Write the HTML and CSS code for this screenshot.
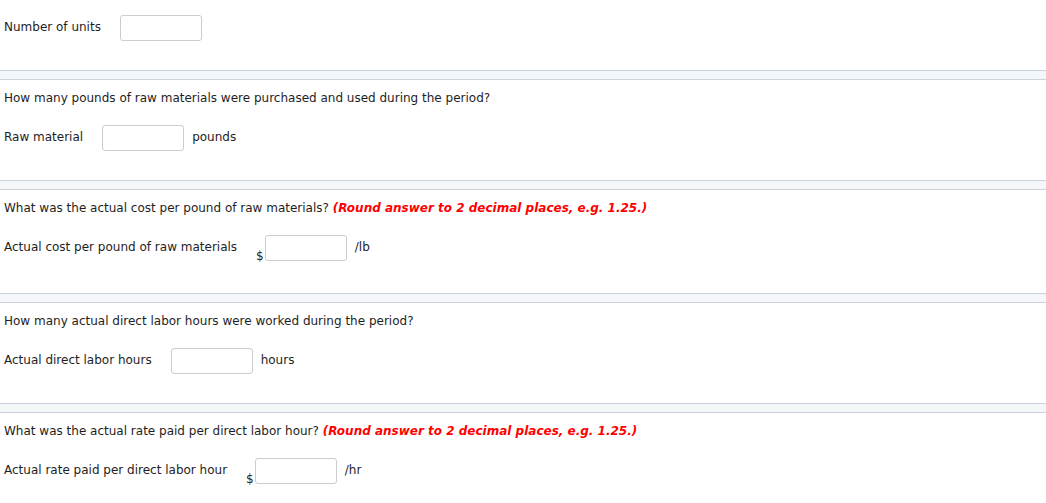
FILE: index.html
```html
<!DOCTYPE html>
<html lang="en">
<head>
<meta charset="utf-8">
<title>Questions</title>
<link rel="stylesheet" href="styles.css">
</head>
<body>
  <div class="section first">
    <div class="row">
      <span class="label">Number of units</span>
      <input class="box" type="text">
    </div>
  </div>

  <div class="divider"></div>
  <div class="section">
    <p class="question">How many pounds of raw materials were purchased and used during the period?</p>
    <div class="row">
      <span class="label">Raw material</span>
      <input class="box" type="text">
      <span class="unit">pounds</span>
    </div>
  </div>

  <div class="divider"></div>
  <div class="section">
    <p class="question">What was the actual cost per pound of raw materials? <em class="hint">(Round answer to 2 decimal places, e.g. 1.25.)</em></p>
    <div class="row has-cur">
      <span class="label">Actual cost per pound of raw materials</span>
      <span class="money"><span class="cur">$</span><input class="box" type="text"></span>
      <span class="unit">/lb</span>
    </div>
  </div>

  <div class="divider"></div>
  <div class="section">
    <p class="question">How many actual direct labor hours were worked during the period?</p>
    <div class="row">
      <span class="label">Actual direct labor hours</span>
      <input class="box" type="text">
      <span class="unit">hours</span>
    </div>
  </div>

  <div class="divider"></div>
  <div class="section">
    <p class="question">What was the actual rate paid per direct labor hour? <em class="hint">(Round answer to 2 decimal places, e.g. 1.25.)</em></p>
    <div class="row has-cur">
      <span class="label">Actual rate paid per direct labor hour</span>
      <span class="money"><span class="cur">$</span><input class="box" type="text"></span>
      <span class="unit">/hr</span>
    </div>
  </div>
</body>
</html>
```

FILE: styles.css
```css
html, body {
  margin: 0;
  padding: 0;
  background: #ffffff;
}

body {
  font-family: "DejaVu Sans", Verdana, sans-serif;
  font-size: 12px;
  line-height: 15px;
  color: #1e1e1e;
}

.section {
  padding: 0 4px 0 4px;
}

.section.first {
  padding-top: 15px;
}

.divider {
  height: 8px;
  border-top: 1px solid #cbd2dc;
  border-bottom: 1px solid #cbd2dc;
  background: #f4f7fa;
}

.question {
  margin: 11px 0 19px 0;
}

.hint {
  color: #ff0000;
  font-weight: bold;
  font-style: italic;
}

.row {
  display: flex;
  align-items: flex-start;
  padding-bottom: 29px;
}

.row.has-cur {
  padding-bottom: 32px;
}

.label {
  padding-top: 5px;
  margin-right: 19px;
}

.money {
  display: flex;
  align-items: flex-end;
}

.cur {
  font-size: 12px;
  line-height: 15px;
  margin-bottom: -3px;
  margin-right: 1px;
}

.box {
  box-sizing: border-box;
  width: 82px;
  height: 26px;
  margin: 0;
  padding: 2px 4px;
  border: 1px solid #cccccc;
  border-radius: 3px;
  background: #ffffff;
  font-family: inherit;
  font-size: 12px;
}

.unit {
  padding-top: 5px;
  margin-left: 8px;
}
```
